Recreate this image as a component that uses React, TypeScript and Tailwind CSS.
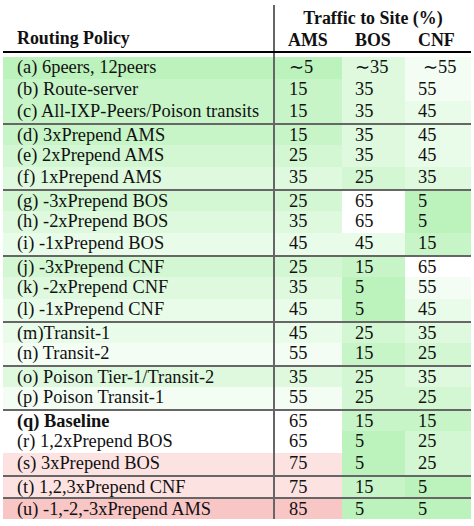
const shade: Record<number, string> = {
  5: "bg-[#bcf3bc]",
  15: "bg-[#c7f5c7]",
  25: "bg-[#d2f7d2]",
  35: "bg-[#def9de]",
  45: "bg-[#e9fbe9]",
  55: "bg-[#f4fdf4]",
  65: "bg-white",
  75: "bg-[#fde2e2]",
  85: "bg-[#f9c6c6]",
};

type Row = {
  label: string;
  vals: [number, number, number];
  approx?: boolean;
  bold?: boolean;
  line?: boolean;
};

const rows: Row[] = [
  { label: "(a) 6peers, 12peers", vals: [5, 35, 55], approx: true },
  { label: "(b) Route-server", vals: [15, 35, 55] },
  { label: "(c) All-IXP-Peers/Poison transits", vals: [15, 35, 45] },
  { label: "(d) 3xPrepend AMS", vals: [15, 35, 45], line: true },
  { label: "(e) 2xPrepend AMS", vals: [25, 35, 45] },
  { label: "(f) 1xPrepend AMS", vals: [35, 25, 35] },
  { label: "(g) -3xPrepend BOS", vals: [25, 65, 5], line: true },
  { label: "(h) -2xPrepend BOS", vals: [35, 65, 5] },
  { label: "(i) -1xPrepend BOS", vals: [45, 45, 15] },
  { label: "(j) -3xPrepend CNF", vals: [25, 15, 65], line: true },
  { label: "(k) -2xPrepend CNF", vals: [35, 5, 55] },
  { label: "(l) -1xPrepend CNF", vals: [45, 5, 45] },
  { label: "(m)Transit-1", vals: [45, 25, 35], line: true },
  { label: "(n) Transit-2", vals: [55, 15, 25] },
  { label: "(o) Poison Tier-1/Transit-2", vals: [35, 25, 35], line: true },
  { label: "(p) Poison Transit-1", vals: [55, 25, 25] },
  { label: "(q) Baseline", vals: [65, 15, 15], bold: true, line: true },
  { label: "(r) 1,2xPrepend BOS", vals: [65, 5, 25] },
  { label: "(s) 3xPrepend BOS", vals: [75, 5, 25] },
  { label: "(t) 1,2,3xPrepend CNF", vals: [75, 15, 5], line: true },
  { label: "(u) -1,-2,-3xPrepend AMS", vals: [85, 5, 5], line: true },
];

export default function App() {
  return (
    <div className="w-[474px] h-[526px] bg-white pt-[5px] pl-[3px] font-[family-name:'Liberation_Serif',serif] text-[18.4px] text-[#111]">
      {/* header */}
      <div className="flex h-[46px] w-[468px] text-[17.9px]">
        <div className="w-[272px] border-r-2 border-[#666] flex items-end pl-[14px] pb-[2px] font-bold leading-[22px]">
          Routing Policy
        </div>
        <div className="flex-1 flex flex-col font-bold leading-[22px]">
          <div className="h-[24px] flex items-end justify-center">Traffic to Site (%)</div>
          <div className="flex h-[22px]">
            <div className="w-[67px] pl-[13px]">AMS</div>
            <div className="w-[63px] pl-[13px]">BOS</div>
            <div className="w-[66px] pl-[13px]">CNF</div>
          </div>
        </div>
      </div>
      <div className="h-[2px] w-[468px] bg-black" />
      <div className="flex h-[4px] w-[468px]">
        <div className="w-[272px] border-r-2 border-[#666]" />
      </div>

      {/* body */}
      {rows.map((r) => (
        <div
          key={r.label}
          className={`flex h-[22px] w-[468px] leading-[20px] ${r.line ? "border-t-2 border-[#666]" : ""}`}
        >
          <div
            className={`w-[272px] border-r-2 border-[#666] pl-[14px] whitespace-nowrap ${shade[r.vals[0]]} ${r.bold ? "font-bold" : ""}`}
          >
            {r.label}
          </div>
          <div className={`w-[67px] pl-[14px] ${shade[r.vals[0]]}`}>
            {r.approx ? "∼" : ""}
            {r.vals[0]}
          </div>
          <div className={`w-[63px] pl-[13px] ${shade[r.vals[1]]}`}>
            {r.approx ? "∼" : ""}
            {r.vals[1]}
          </div>
          <div className={`w-[66px] ${r.approx ? "pl-[18px]" : "pl-[13px]"} ${shade[r.vals[2]]}`}>
            {r.approx ? "∼" : ""}
            {r.vals[2]}
          </div>
        </div>
      ))}
    </div>
  );
}
